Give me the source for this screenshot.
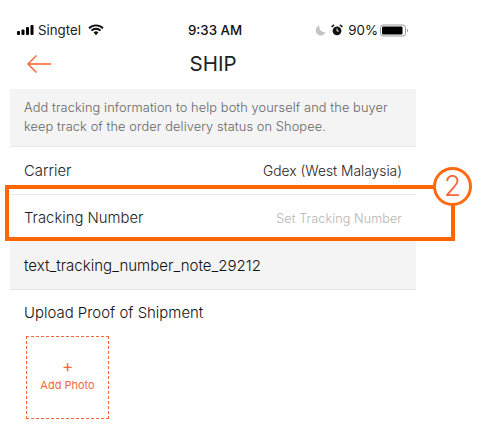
<script>
</script>

<div class="page">
  <div class="status">
    <div class="st-left">
      <svg class="signal" width="18" height="11" viewBox="0 0 18 11"><rect x="0" y="6" width="3" height="4" rx="1"/><rect x="4.5" y="4.5" width="3" height="5.5" rx="1"/><rect x="9" y="2" width="3" height="8" rx="1"/><rect x="13.5" y="0" width="3" height="10" rx="1"/></svg>
      <span class="carrier-name">Singtel</span>
      <svg class="wifi" width="16" height="12" viewBox="0 0 16 12"><path d="M1 4.2a10 10 0 0 1 14 0M3.4 6.6a6.6 6.6 0 0 1 9.2 0" fill="none" stroke="#111" stroke-width="1.9"/><path d="M5.6 8.6a3.3 3.3 0 0 1 4.8 0L8 11.2z" fill="#111"/></svg>
    </div>
    <div class="st-time">9:33 AM</div>
    <div class="st-right">
      <svg width="11" height="11" viewBox="0 0 11 11"><path d="M4.4.6a5 5 0 1 0 6 6.6A5.5 5.5 0 0 1 4.4.6z" fill="#c4c4c4"/></svg>
      <svg class="alarm" width="12" height="12" viewBox="0 0 12 12"><circle cx="6" cy="6.8" r="4.4" fill="#111"/><path d="M6 4.5v2.6h1.8" fill="none" stroke="#fff" stroke-width=".9"/><path d="M.6 3 3 .8M11.4 3 9 .8" stroke="#111" stroke-width="1.6"/></svg>
      <span class="pct">90%</span>
      <svg width="29" height="13" viewBox="0 0 29 13"><rect x=".5" y="1" width="25" height="11" rx="2.5" fill="none" stroke="#999"/><rect x="2" y="2.5" width="20.5" height="8" rx="1" fill="#000"/><path d="M27 5v3l1-.6v-1.8z" fill="#999"/></svg>
    </div>
  </div>

  <header class="nav">
    <svg class="back" width="26" height="20" viewBox="0 0 26 20"><path d="M25 10H2M10.500 1.500 2 10l8.500 8.500" fill="none" stroke="#ff5f2e" stroke-width="1.400"/></svg>
    <h1>SHIP</h1>
  </header>

  <main class="content">
    <p class="info">Add tracking information to help both yourself and the buyer keep track of the order delivery status on Shopee.</p>
    <div class="row carrier">
      <span>Carrier</span>
      <span class="value">Gdex (West Malaysia)</span>
    </div>
    <div class="row tracking">
      <span>Tracking Number</span>
      <span class="placeholder">Set Tracking Number</span>
    </div>
    <div class="note">text_tracking_number_note_29212</div>
    <div class="upload">
      <div class="upload-title">Upload Proof of Shipment</div>
      <button class="add">
        <span class="plus">+</span>
        <span class="add-label">Add Photo</span>
      </button>
    </div>
  </main>

  <div class="callout-box"></div>
  <div class="callout-num">2</div>
</div>

<style>
  :global(body) { margin: 0; background: #fff; }
  .page {
    position: relative;
    width: 484px;
    height: 429px;
    overflow: hidden;
    background: #fff;
    font-family: Inter, "Liberation Sans", sans-serif;
    font-weight: 300;
    color: #222;
  }
  .status {
    display: grid;
    grid-template-columns: 1fr auto 1fr;
    align-items: center;
    box-sizing: border-box;
    width: 416px;
    height: 20px;
    margin-left: 10px;
    padding: 0 17px 0 7px;
    position: relative;
    top: 20px;
    font-size: 13px;
    color: #111;
  }
  .st-left, .st-right { display: flex; align-items: center; }
  .st-left { gap: 3px; }
  .carrier-name { font-weight: 400; font-size: 13.3px; color: #222; margin-right: 4px; }
  .st-right { justify-content: flex-end; gap: 5px; }
  .st-time { font-weight: 500; font-size: 13.300px; position: relative; left: 2px; }
  .pct { font-weight: 400; font-size: 13.3px; margin-right: -3px; }
  .nav {
    position: relative;
    display: flex;
    justify-content: center;
    align-items: center;
    width: 426px;
    height: 49px;
    margin-top: 20px;
  }
  .back { position: absolute; left: 26px; top: 14px; }
  h1 { margin: 0; font-size: 20.5px; font-weight: 400; color: #222; position: relative; top: -1px; }
  .content { width: 406px; margin-left: 10px; }
  .info {
    margin: 0;
    box-sizing: border-box;
    height: 58px;
    padding: 10px 14px 0;
    background: #f4f4f4;
    border-bottom: 1px solid #e8e8e8;
    color: #666;
    font-size: 12.8px;
    line-height: 18.500px;
    letter-spacing: 0.1px;
  }
  .row {
    display: flex;
    justify-content: space-between;
    align-items: center;
    box-sizing: border-box;
    padding: 0 14px;
    font-size: 14.85px;
  }
  .carrier { height: 48px; border-bottom: 1px solid #e8e8e8; }
  .tracking { height: 46px; }
  .value { color: #222; font-size: 13.8px; }
  .placeholder { color: #b4b4b4; font-size: 12.6px; letter-spacing: 0.1px; }
  .note {
    box-sizing: border-box;
    height: 49px;
    padding: 0 14px;
    display: flex;
    align-items: center;
    background: #f4f4f4;
    border-bottom: 1px solid #e6e6e6;
    font-size: 15.05px;
    color: #111;
  }
  .upload { padding: 15px 14px 0; }
  .upload-title { font-size: 14.95px; line-height: 17px; color: #111; }
  .add {
    display: flex;
    flex-direction: column;
    align-items: center;
    justify-content: center;
    box-sizing: border-box;
    width: 83px;
    height: 83px;
    margin: 14px 0 0 2px;
    padding: 0 0 3px;
    background: #fff;
    border: 1px dashed #f4673a;
    font-family: inherit;
    font-weight: 400;
    color: #f4673a;
  }
  .plus { font-size: 17px; line-height: 17px; }
  .add-label { font-size: 11px; line-height: 17px; margin-top: 2px; }
  .callout-box {
    position: absolute;
    left: 5px;
    top: 185px;
    width: 450px;
    height: 56px;
    box-sizing: border-box;
    border: 4px solid #ff6600;
  }
  .callout-num {
    position: absolute;
    left: 433px;
    top: 167px;
    width: 39px;
    height: 39px;
    box-sizing: border-box;
    border: 3px solid #ff6a13;
    border-radius: 50%;
    background: #fff;
    color: #f4673a;
    font-size: 28px;
    font-weight: 300;
    line-height: 33px;
    text-align: center;
  }
</style>
